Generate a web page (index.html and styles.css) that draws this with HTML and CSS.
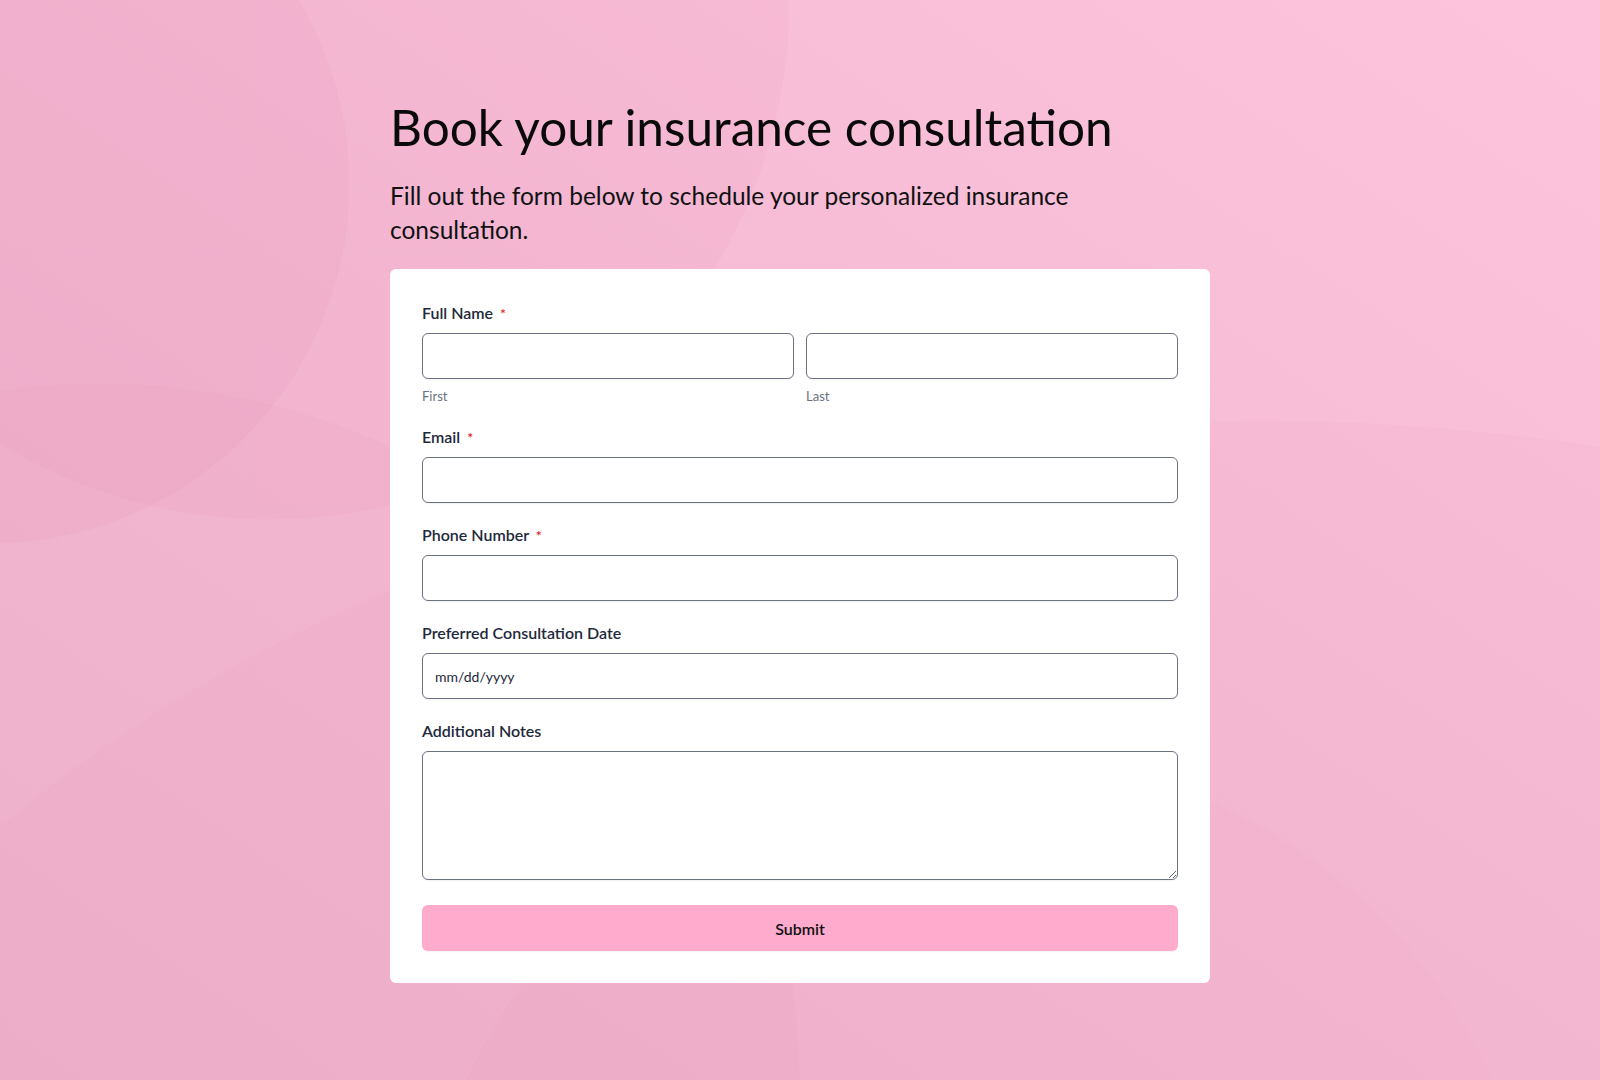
FILE: index.html
```html
<!DOCTYPE html>
<html lang="en">
<head>
  <meta charset="UTF-8" />
  <title>Book your insurance consultation</title>
  <link rel="stylesheet" href="styles.css">
</head>
<body>
  <main class="page">
    <h1>Book your insurance consultation</h1>
    <p class="intro">Fill out the form below to schedule your personalized insurance consultation.</p>

    <form class="card" onsubmit="return false;">
      <div class="field">
        <label class="field-label">Full Name <span class="req">*</span></label>
        <div class="name-row">
          <div class="name-part">
            <input type="text" id="first" name="first">
            <label class="hint" for="first">First</label>
          </div>
          <div class="name-part">
            <input type="text" id="last" name="last">
            <label class="hint" for="last">Last</label>
          </div>
        </div>
      </div>

      <div class="field">
        <label class="field-label" for="email">Email <span class="req">*</span></label>
        <input type="email" id="email" name="email">
      </div>

      <div class="field">
        <label class="field-label" for="phone">Phone Number <span class="req">*</span></label>
        <input type="tel" id="phone" name="phone">
      </div>

      <div class="field">
        <label class="field-label" for="date">Preferred Consultation Date</label>
        <input type="text" id="date" name="date" class="date" placeholder="mm/dd/yyyy">
      </div>

      <div class="field">
        <label class="field-label" for="notes">Additional Notes</label>
        <textarea id="notes" name="notes"></textarea>
      </div>

      <button type="submit">Submit</button>
    </form>
  </main>
</body>
</html>
```

FILE: styles.css
```css
html, body {
  margin: 0;
  min-height: 100%;
}
body {
  font-family: Lato, "Open Sans", Arial, sans-serif;
  color: #111;
  min-height: 1080px;
  background:
    radial-gradient(circle at -10px 184px, rgba(205, 95, 145, 0.06) 359px, transparent 360px),
    radial-gradient(circle at 270px 0px, rgba(205, 95, 145, 0.05) 519px, transparent 520px),
    radial-gradient(circle at 100px 1083px, rgba(205, 95, 145, 0.04) 699px, transparent 700px),
    radial-gradient(circle at 980px 1320px, rgba(205, 95, 145, 0.03) 567px, transparent 568px),
    radial-gradient(1600px 1080px at 1250px 1500px, rgba(205, 95, 145, 0.04) 99.9%, transparent 100%),
    linear-gradient(to bottom left, #fdc3dd, #f5bad4 50%, #efb4cd);
}
.page {
  width: 820px;
  margin: 0 auto;
  padding: 97px 0 97px;
}
h1 {
  margin: 0 0 22px;
  font-size: 49.5px;
  line-height: 60px;
  font-weight: 400;
  color: #0a0a0a;
}
.intro {
  margin: 0 0 22px;
  max-width: 740px;
  font-size: 24.5px;
  line-height: 34px;
  color: #111;
}
.card {
  background: #fff;
  border-radius: 6px;
  padding: 32px;
  display: flex;
  flex-direction: column;
  gap: 20px;
}
.field {
  display: flex;
  flex-direction: column;
}
.field-label {
  font-size: 16px;
  line-height: 24px;
  font-weight: 600;
  color: #1e293b;
  margin-bottom: 8px;
}
.req {
  color: #dc2626;
  font-size: 14px;
  line-height: 1;
  margin-left: 3px;
}
.name-row {
  display: flex;
  gap: 12px;
}
.name-part {
  flex: 1;
  display: flex;
  flex-direction: column;
}
.hint {
  margin-top: 8px;
  font-size: 13px;
  line-height: 18px;
  color: #6b7280;
}
input, textarea {
  box-sizing: border-box;
  width: 100%;
  height: 46px;
  padding: 0 12px;
  border: 1px solid #6b7280;
  border-radius: 6px;
  background: #fff;
  font-family: inherit;
  font-size: 14px;
  color: #1e293b;
  box-shadow: 0 1px 2px rgba(0, 0, 0, 0.06);
  outline: none;
}
input.date::placeholder {
  color: #1e293b;
  opacity: 1;
}
textarea {
  display: block;
  height: 129px;
  padding: 10px 12px;
  resize: vertical;
}
button {
  margin-top: 5px;
  height: 46px;
  border: none;
  border-radius: 6px;
  background: #ffabce;
  color: #111;
  font-family: inherit;
  font-size: 16px;
  font-weight: 600;
  cursor: pointer;
  box-shadow: 0 1px 2px rgba(0, 0, 0, 0.06);
}
button:hover {
  background: #ff9fc6;
}
```
